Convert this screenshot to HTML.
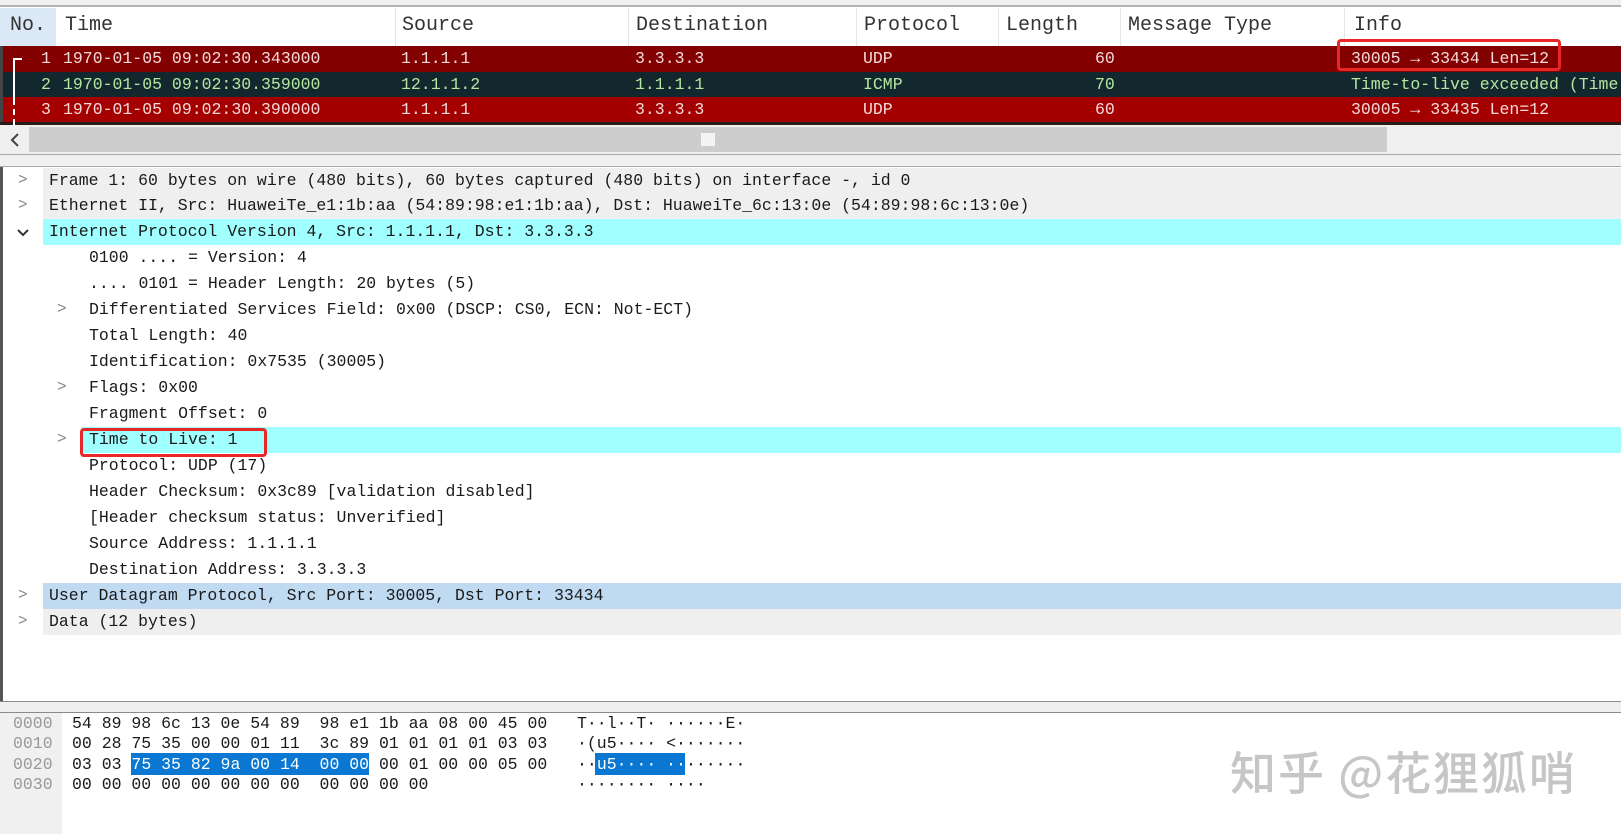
<!DOCTYPE html>
<html><head><meta charset="utf-8"><style>
*{margin:0;padding:0;box-sizing:border-box}
body{width:1621px;height:834px;overflow:hidden;background:#fff;position:relative;font-family:"Liberation Mono",monospace;font-size:16.5px;color:#1a1a1a}
.a{position:absolute;white-space:pre}
.hd{font-size:20px;color:#333;top:14px}
.row{position:absolute;left:3px;right:0;height:25.5px}
.row span{position:absolute;top:3px;white-space:pre}
.sep{position:absolute;top:8px;width:1px;height:38px;background:#e6e6e6}
.d{position:absolute;left:0;right:0;height:26px}
.d span{position:absolute;top:3px;white-space:pre}
.bg{position:absolute;top:0;bottom:0;right:0}
.ar{position:absolute;top:3px;color:#888;font-size:16px}
.hx{position:absolute;white-space:pre}
</style></head><body>
<div class="a" style="left:0;top:0;width:1621px;height:7px;background:#f0f0f0;border-bottom:2px solid #b4b4b4"></div>
<div class="a" style="left:0;top:8px;width:56px;height:38px;background:#dbe8f5"></div>
<div class="sep" style="left:395px"></div><div class="sep" style="left:628px"></div><div class="sep" style="left:856px"></div><div class="sep" style="left:998px"></div><div class="sep" style="left:1120px"></div><div class="sep" style="left:1344px"></div>
<div class="a hd" style="left:10px">No.</div>
<div class="a hd" style="left:65px">Time</div>
<div class="a hd" style="left:402px">Source</div>
<div class="a hd" style="left:636px">Destination</div>
<div class="a hd" style="left:864px">Protocol</div>
<div class="a hd" style="left:1006px">Length</div>
<div class="a hd" style="left:1128px">Message Type</div>
<div class="a hd" style="left:1354px">Info</div>
<div class="a" style="left:0;top:46px;width:3px;height:80px;background:#444"></div>
<div class="row" style="top:46px;background:#820000;color:#f4dada">
<span style="left:38px">1</span><span style="left:60px">1970-01-05 09:02:30.343000</span><span style="left:398px">1.1.1.1</span><span style="left:632px">3.3.3.3</span><span style="left:860px">UDP</span><span style="left:1092px">60</span><span style="left:1348px">30005 → 33434 Len=12</span></div>
<div class="row" style="top:71.5px;background:#12272e;color:#b5e7a0">
<span style="left:38px">2</span><span style="left:60px">1970-01-05 09:02:30.359000</span><span style="left:398px">12.1.1.2</span><span style="left:632px">1.1.1.1</span><span style="left:860px">ICMP</span><span style="left:1092px">70</span><span style="left:1348px">Time-to-live exceeded (Time</span></div>
<div class="row" style="top:97px;background:#a40000;color:#f4dada">
<span style="left:38px">3</span><span style="left:60px">1970-01-05 09:02:30.390000</span><span style="left:398px">1.1.1.1</span><span style="left:632px">3.3.3.3</span><span style="left:860px">UDP</span><span style="left:1092px">60</span><span style="left:1348px">30005 → 33435 Len=12</span></div>
<div class="a" style="left:0;top:122px;width:1621px;height:3px;background:#2a1a1a"></div>
<div class="a" style="left:13px;top:59px;width:2px;height:66px;border-left:2px dashed #fff"></div>
<div class="a" style="left:13px;top:59px;width:2px;height:40px;background:#fff"></div>
<div class="a" style="left:13px;top:58px;width:9px;height:2px;background:#fff"></div>
<div class="a" style="left:1337px;top:39px;width:224px;height:32px;border:3px solid #e82828;border-radius:4px"></div>
<div class="a" style="left:0;top:125px;width:1621px;height:29px;background:#f0f0f0"></div>
<svg class="a" style="left:9px;top:132px" width="12" height="16"><path d="M9 2 L3 8 L9 14" fill="none" stroke="#444" stroke-width="2"/></svg>
<div class="a" style="left:29px;top:127px;width:1358px;height:25px;background:#cdcdcd"></div>
<div class="a" style="left:701px;top:133px;width:14px;height:13px;background:#f4f4f4"></div>
<div class="a" style="left:0;top:154px;width:1621px;height:13px;background:#f0f0f0;border-top:1px solid #a8a8a8;border-bottom:1px solid #a8a8a8"></div>
<div class="a" style="left:0;top:167px;width:3px;height:534px;background:#555"></div>
<div style="position:absolute;left:0;top:167.5px;width:1621px">
<div class="d" style="top:0"><div class="bg" style="left:43px;background:#efefef"></div><span class="ar" style="left:18px">&gt;</span><span style="left:49px">Frame 1: 60 bytes on wire (480 bits), 60 bytes captured (480 bits) on interface -, id 0</span></div>
<div class="d" style="top:25.97px"><div class="bg" style="left:43px;background:#efefef"></div><span class="ar" style="left:18px">&gt;</span><span style="left:49px">Ethernet II, Src: HuaweiTe_e1:1b:aa (54:89:98:e1:1b:aa), Dst: HuaweiTe_6c:13:0e (54:89:98:6c:13:0e)</span></div>
<div class="d" style="top:51.94px"><div class="bg" style="left:43px;background:#a0ffff"></div><svg style="position:absolute;left:16px;top:9px" width="14" height="10"><path d="M2 2 L7 7 L12 2" fill="none" stroke="#333" stroke-width="2"/></svg><span style="left:49px">Internet Protocol Version 4, Src: 1.1.1.1, Dst: 3.3.3.3</span></div>
<div class="d" style="top:77.91px"><span style="left:89px">0100 .... = Version: 4</span></div>
<div class="d" style="top:103.88px"><span style="left:89px">.... 0101 = Header Length: 20 bytes (5)</span></div>
<div class="d" style="top:129.85px"><span class="ar" style="left:57px">&gt;</span><span style="left:89px">Differentiated Services Field: 0x00 (DSCP: CS0, ECN: Not-ECT)</span></div>
<div class="d" style="top:155.82px"><span style="left:89px">Total Length: 40</span></div>
<div class="d" style="top:181.79px"><span style="left:89px">Identification: 0x7535 (30005)</span></div>
<div class="d" style="top:207.76px"><span class="ar" style="left:57px">&gt;</span><span style="left:89px">Flags: 0x00</span></div>
<div class="d" style="top:233.73px"><span style="left:89px">Fragment Offset: 0</span></div>
<div class="d" style="top:259.7px"><div class="bg" style="left:81px;background:#a0ffff"></div><span class="ar" style="left:57px">&gt;</span><span style="left:89px">Time to Live: 1</span></div>
<div class="d" style="top:285.67px"><span style="left:89px">Protocol: UDP (17)</span></div>
<div class="d" style="top:311.64px"><span style="left:89px">Header Checksum: 0x3c89 [validation disabled]</span></div>
<div class="d" style="top:337.61px"><span style="left:89px">[Header checksum status: Unverified]</span></div>
<div class="d" style="top:363.58px"><span style="left:89px">Source Address: 1.1.1.1</span></div>
<div class="d" style="top:389.55px"><span style="left:89px">Destination Address: 3.3.3.3</span></div>
<div class="d" style="top:415.52px"><div class="bg" style="left:43px;background:#c0daf2"></div><span class="ar" style="left:18px">&gt;</span><span style="left:49px">User Datagram Protocol, Src Port: 30005, Dst Port: 33434</span></div>
<div class="d" style="top:441.49px"><div class="bg" style="left:43px;background:#efefef"></div><span class="ar" style="left:18px">&gt;</span><span style="left:49px">Data (12 bytes)</span></div>
</div>
<div class="a" style="left:80px;top:428px;width:187px;height:29px;border:3px solid #e82828;border-radius:4px"></div>
<div class="a" style="left:0;top:701px;width:1621px;height:12px;background:#efefef;border-top:1px solid #8a8a8a;border-bottom:1px solid #8a8a8a"></div>
<div class="a" style="left:0;top:713px;width:62px;height:121px;background:#f0f0f0"></div>
<div class="a" style="left:131px;top:753px;width:238px;height:22px;background:#0a78d2"></div>
<div class="a" style="left:595px;top:753px;width:90px;height:22px;background:#0a78d2"></div>
<div class="hx" style="left:13px;top:714px;line-height:20.4px;color:#999">0000
0010
0020
0030</div>
<div class="hx" style="left:72px;top:714px;line-height:20.4px">54 89 98 6c 13 0e 54 89  98 e1 1b aa 08 00 45 00
00 28 75 35 00 00 01 11  3c 89 01 01 01 01 03 03
03 03 <span style="color:#fff">75 35 82 9a 00 14  00 00</span> 00 01 00 00 05 00
00 00 00 00 00 00 00 00  00 00 00 00</div>
<div class="hx" style="left:577px;top:714px;line-height:20.4px">T··l··T· ······E·
·(u5···· &lt;·······
··<span style="color:#fff">u5···· ··</span>······
········ ····</div>
<div class="a" style="left:1230px;top:738px;font-family:'Noto Sans CJK SC',sans-serif;font-size:46px;color:#c6c6c6;font-weight:500;letter-spacing:2px">知乎 @花狸狐哨</div>
</body></html>
